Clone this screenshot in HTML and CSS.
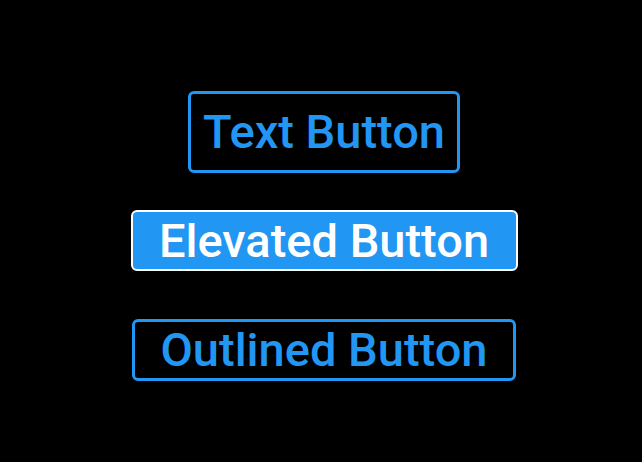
FILE: index.html
```html
<!DOCTYPE html>
<html lang="en">
<head>
  <meta charset="UTF-8">
  <title>Buttons</title>
  <link rel="stylesheet" href="styles.css">
</head>
<body>
  <div class="container">
    <button class="btn btn-text">Text Button</button>
    <button class="btn btn-elevated">Elevated Button</button>
    <button class="btn btn-outlined">Outlined Button</button>
  </div>
</body>
</html>
```
FILE: styles.css
```css
html, body {
  margin: 0;
  height: 100%;
  background: #000;
}
body {
  font-family: Roboto, "Noto Sans", sans-serif;
}
.container {
  height: 100%;
  display: flex;
  flex-direction: column;
  align-items: center;
  justify-content: center;
  padding: 10px 0 0 6px;
  box-sizing: border-box;
}
.btn {
  font-family: inherit;
  font-size: 47px;
  font-weight: 500;
  line-height: 56px;
  border-radius: 6px;
  padding: 0;
  cursor: pointer;
  box-sizing: border-box;
}
.btn-text {
  background: transparent;
  color: #2196f3;
  border: 3px solid #2196f3;
  width: 272px;
  height: 82px;
}
.btn-elevated {
  margin-top: 37px;
  background: #2196f3;
  color: #fff;
  border: 2px solid #fff;
  width: 387px;
  height: 61px;
}
.btn-outlined {
  margin-top: 48px;
  background: transparent;
  color: #2196f3;
  border: 3px solid #2196f3;
  width: 384px;
  height: 62px;
}
```
